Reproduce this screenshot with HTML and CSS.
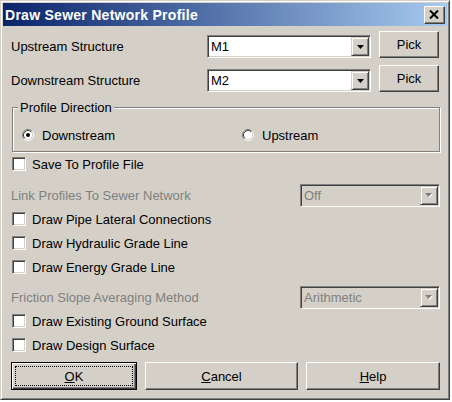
FILE: index.html
```html
<!DOCTYPE html>
<html>
<head>
<meta charset="utf-8">
<link rel="stylesheet" href="styles.css">
</head>
<body>
<div class="window">
  <div class="titlebar">
    <span class="title">Draw Sewer Network Profile</span>
    <div class="close">
      <svg width="10" height="9" viewBox="0 0 10 9"><path d="M1 0.5 L9 8.5 M9 0.5 L1 8.5" stroke="#000" stroke-width="2" fill="none"/></svg>
    </div>
  </div>
  <div class="client">
    <div class="row row-first">
      <span class="label">Upstream Structure</span>
      <div class="combo"><span class="value">M1</span><span class="dd"><svg width="7" height="4" viewBox="0 0 7 4"><path d="M0 0h7l-3.5 4z" fill="#000"/></svg></span></div>
      <div class="btn pick">Pick</div>
    </div>
    <div class="row row-second">
      <span class="label">Downstream Structure</span>
      <div class="combo"><span class="value">M2</span><span class="dd"><svg width="7" height="4" viewBox="0 0 7 4"><path d="M0 0h7l-3.5 4z" fill="#000"/></svg></span></div>
      <div class="btn pick">Pick</div>
    </div>

    <div class="group">
      <span class="group-title">Profile Direction</span>
      <div class="radio-row">
        <div class="radio radio-first">
          <svg width="12" height="12" viewBox="0 0 12 12">
            <circle cx="6" cy="6" r="4.5" fill="#fff"/>
            <path d="M9.89 2.11 A5.5 5.5 0 0 0 2.11 9.89" stroke="#808080" fill="none"/>
            <path d="M2.11 9.89 A5.5 5.5 0 0 0 9.89 2.11" stroke="#fff" fill="none"/>
            <path d="M9.18 2.82 A4.5 4.5 0 0 0 2.82 9.18" stroke="#404040" fill="none"/>
            <path d="M2.82 9.18 A4.5 4.5 0 0 0 9.18 2.82" stroke="#d4d0c8" fill="none"/>
            <circle cx="6" cy="6" r="2" fill="#000"/>
          </svg>
          <span>Downstream</span>
        </div>
        <div class="radio">
          <svg width="12" height="12" viewBox="0 0 12 12">
            <circle cx="6" cy="6" r="4.5" fill="#fff"/>
            <path d="M9.89 2.11 A5.5 5.5 0 0 0 2.11 9.89" stroke="#808080" fill="none"/>
            <path d="M2.11 9.89 A5.5 5.5 0 0 0 9.89 2.11" stroke="#fff" fill="none"/>
            <path d="M9.18 2.82 A4.5 4.5 0 0 0 2.82 9.18" stroke="#404040" fill="none"/>
            <path d="M2.82 9.18 A4.5 4.5 0 0 0 9.18 2.82" stroke="#d4d0c8" fill="none"/>
          </svg>
          <span>Upstream</span>
        </div>
      </div>
    </div>

    <div class="cb"><span class="box"></span><span>Save To Profile File</span></div>

    <div class="drow drow-link">
      <span class="dlabel">Link Profiles To Sewer Network</span>
      <div class="combo combo-disabled"><span class="value">Off</span><span class="dd"><svg width="8" height="5" viewBox="0 0 8 5"><path d="M1 1h7l-3.5 4z" fill="#fff"/><path d="M0 0h7l-3.5 4z" fill="#808080"/></svg></span></div>
    </div>

    <div class="cb"><span class="box"></span><span>Draw Pipe Lateral Connections</span></div>
    <div class="cb"><span class="box"></span><span>Draw Hydraulic Grade Line</span></div>
    <div class="cb"><span class="box"></span><span>Draw Energy Grade Line</span></div>

    <div class="drow drow-friction">
      <span class="dlabel">Friction Slope Averaging Method</span>
      <div class="combo combo-disabled"><span class="value">Arithmetic</span><span class="dd"><svg width="8" height="5" viewBox="0 0 8 5"><path d="M1 1h7l-3.5 4z" fill="#fff"/><path d="M0 0h7l-3.5 4z" fill="#808080"/></svg></span></div>
    </div>

    <div class="cb"><span class="box"></span><span>Draw Existing Ground Surface</span></div>
    <div class="cb"><span class="box"></span><span>Draw Design Surface</span></div>

    <div class="buttons">
      <div class="btn btn-default btn-ok"><span class="focus"><u>O</u>K</span></div>
      <div class="btn btn-cancel"><u>C</u>ancel</div>
      <div class="btn btn-help"><u>H</u>elp</div>
    </div>
  </div>
</div>
</body>
</html>
```

FILE: styles.css
```css
html, body {
  margin: 0;
  padding: 0;
  background: #ffffff;
}

body {
  font-family: "Liberation Sans", Arial, sans-serif;
  font-size: 13px;
  color: #000;
}

.window {
  width: 450px;
  height: 400px;
  box-sizing: border-box;
  background: #d4d0c8;
  border: 1px solid;
  border-color: #d4d0c8 #404040 #404040 #d4d0c8;
  box-shadow: inset 1px 1px 0 #ffffff, inset -1px -1px 0 #808080;
  padding: 2px;
}

.titlebar {
  height: 23px;
  background: linear-gradient(to right, #0a246a, #a6caf0);
  display: flex;
  align-items: center;
  justify-content: space-between;
  padding: 0 2px 0 2px;
}

.title {
  color: #fff;
  font-weight: bold;
  font-size: 14px;
  letter-spacing: 0.27px;
  white-space: nowrap;
}

.close {
  width: 21px;
  height: 18px;
  box-sizing: border-box;
  background: #d4d0c8;
  border: 1px solid;
  border-color: #ffffff #404040 #404040 #ffffff;
  box-shadow: inset -1px -1px 0 #808080;
  display: flex;
  align-items: center;
  justify-content: center;
}

.close svg {
  display: block;
  margin-left: -1px;
}

.client {
  display: flex;
  flex-direction: column;
  padding-left: 8px;
}

.row {
  display: flex;
  align-items: flex-end;
  height: 27px;
}

.row-first {
  margin-top: 5px;
}

.row-second {
  margin-top: 7px;
}

.label {
  width: 196px;
  height: 23px;
  line-height: 23px;
  white-space: nowrap;
}

.combo {
  width: 164px;
  height: 23px;
  box-sizing: border-box;
  border: 1px solid;
  border-color: #808080 #ffffff #ffffff #808080;
  box-shadow: inset 1px 1px 0 #404040, inset -1px -1px 0 #d4d0c8;
  background: #fff;
  padding: 1px;
  display: flex;
  align-items: stretch;
}

.value {
  flex: 1;
  padding-left: 2px;
  line-height: 19px;
  white-space: nowrap;
}

.dd {
  width: 18px;
  box-sizing: border-box;
  background: #d4d0c8;
  border: 1px solid;
  border-color: #d4d0c8 #404040 #404040 #d4d0c8;
  box-shadow: inset 1px 1px 0 #ffffff, inset -1px -1px 0 #808080;
  display: flex;
  align-items: center;
  justify-content: center;
}

.dd svg {
  display: block;
}

.combo-disabled {
  width: 140px;
  background: #d4d0c8;
  color: #808080;
}

.btn {
  box-sizing: border-box;
  background: #d4d0c8;
  border: 1px solid;
  border-color: #ffffff #404040 #404040 #ffffff;
  box-shadow: inset -1px -1px 0 #808080;
  display: flex;
  align-items: center;
  justify-content: center;
  white-space: nowrap;
}

.pick {
  width: 60px;
  height: 27px;
  margin-left: 8px;
  padding-bottom: 1px;
}

.group {
  margin-top: 15px;
  margin-left: 1px;
  width: 428px;
  box-sizing: border-box;
  border: 1px solid #808080;
  box-shadow: inset 1px 1px 0 #ffffff, 1px 1px 0 #ffffff;
  padding: 0 0 9px 9px;
  display: flex;
  flex-direction: column;
}

.group-title {
  align-self: flex-start;
  margin-top: -7px;
  margin-left: -4px;
  padding: 0 2px;
  background: #d4d0c8;
  line-height: 13px;
  white-space: nowrap;
}

.radio-row {
  display: flex;
  margin-top: 14px;
  height: 14px;
}

.radio {
  display: flex;
  align-items: center;
  gap: 8px;
}

.radio-first {
  width: 220px;
}

.radio svg {
  display: block;
}

.cb {
  height: 24px;
  display: flex;
  align-items: center;
  margin-left: 1px;
  white-space: nowrap;
}

.box {
  width: 14px;
  height: 14px;
  box-sizing: border-box;
  border: 1px solid;
  border-color: #808080 #ffffff #ffffff #808080;
  box-shadow: inset 1px 1px 0 #404040, inset -1px -1px 0 #d4d0c8;
  background: #fff;
  margin-right: 6px;
  flex-shrink: 0;
}

.drow {
  width: 429px;
  height: 23px;
  display: flex;
  align-items: center;
  justify-content: space-between;
  margin-top: 8px;
}

.drow-friction {
  margin-top: 7px;
}

.dlabel {
  color: #808080;
  white-space: nowrap;
}

.buttons {
  display: flex;
  gap: 8px;
  margin-top: 5px;
  height: 28px;
}

.buttons .btn {
  height: 28px;
}

.btn-ok {
  width: 126px;
}

.btn-cancel {
  width: 153px;
}

.btn-help {
  width: 134px;
}

.btn-default {
  border: 1px solid #000;
  box-shadow: inset 1px 1px 0 #ffffff, inset -1px -1px 0 #404040, inset -2px -2px 0 #808080;
  padding: 3px;
  align-items: stretch;
  justify-content: stretch;
}

.focus {
  flex: 1;
  border: 1px dotted #000;
  display: flex;
  align-items: center;
  justify-content: center;
}
```
